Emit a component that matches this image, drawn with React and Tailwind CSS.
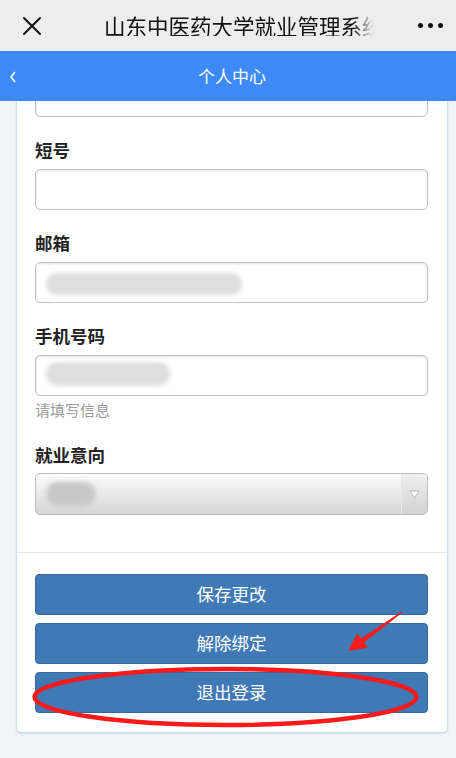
import React from "react";

const font = { fontFamily: '"Noto Sans CJK SC", "Noto Sans", sans-serif' };

const Blur = ({ className }) => (
  <div className={`absolute rounded-full bg-[#dedede] blur-[2px] ${className}`} />
);

const Field = ({ label, children }) => (
  <div>
    <div className="text-[17.5px] font-bold text-[#222] leading-6 mt-[21px] mb-[7px]">{label}</div>
    {children}
  </div>
);

const Input = ({ children }) => (
  <div className="relative h-[41px] rounded-[5px] border border-[#c2c2c2] bg-white shadow-[inset_0_1px_3px_rgba(0,0,0,0.12)] overflow-hidden">
    {children}
  </div>
);

export default function App() {
  return (
    <div className="relative w-[456px] h-[758px] overflow-hidden bg-[#f3f4f8] flex flex-col" style={font}>
      {/* WeChat top bar */}
      <div className="h-[51px] shrink-0 bg-[#ededed] flex items-center">
        <svg width="20" height="20" viewBox="0 0 20 20" className="ml-[22px]">
          <path d="M2 2 L18 18 M18 2 L2 18" stroke="#111" strokeWidth="2" strokeLinecap="round" />
        </svg>
        <div className="ml-[62px] w-[270px] overflow-hidden whitespace-nowrap text-[21.5px] text-[#111] leading-none [mask-image:linear-gradient(to_right,black_92%,transparent_100%)]">
          山东中医药大学就业管理系统
        </div>
        <div className="ml-auto mr-[13px] flex gap-[5px]">
          <span className="w-[5px] h-[5px] rounded-full bg-[#111]" />
          <span className="w-[5px] h-[5px] rounded-full bg-[#111]" />
          <span className="w-[5px] h-[5px] rounded-full bg-[#111]" />
        </div>
      </div>

      {/* Page header */}
      <div className="relative h-[50px] shrink-0 bg-[#3d8af6] flex items-center justify-center">
        <svg width="8" height="12" viewBox="0 0 8 12" className="absolute left-[9px] top-[20px]">
          <path d="M6 1 L2 6 L6 11" stroke="#fff" strokeWidth="1.6" fill="none" />
        </svg>
        <span className="text-[17px] text-white pl-2">个人中心</span>
      </div>

      {/* Scroll content */}
      <div className="flex-1 overflow-hidden">
        <div className="ml-4 mr-2 bg-white border border-t-0 border-[#c9e0ec] rounded-b-[5px] shadow-[0_1px_2px_rgba(150,190,210,0.4)]">
          <div className="pl-[18px] pr-[19px] pb-[37px] border-b border-[#e6e6e6]">
            <div className="-mt-[25px]">
              <Input />
            </div>

            <Field label="短号">
              <Input />
            </Field>

            <Field label="邮箱">
              <Input>
                <Blur className="left-[10px] top-[10px] w-[196px] h-[22px]" />
              </Input>
            </Field>

            <Field label="手机号码">
              <Input>
                <Blur className="left-[10px] top-[6px] w-[124px] h-[24px]" />
              </Input>
            </Field>
            <div className="mt-[4px] text-[15px] leading-5 text-[#9a9a9a]">请填写信息</div>

            <div className="text-[17.5px] font-bold text-[#222] leading-6 mt-[23px] mb-[6px]">就业意向</div>
            <div className="relative h-[42px] rounded-[5px] border border-[#bdbdbd] bg-gradient-to-b from-[#fbfbfb] to-[#d6d6d6] flex overflow-hidden">
              <div className="absolute left-[10px] top-[8px] w-[50px] h-[24px] rounded-full bg-[#c8c8c8] blur-[2px]" />
              <div className="ml-auto w-[26px] border-l border-[#e8e8e8] bg-gradient-to-b from-[#f0f0f0] to-[#d2d2d2] flex items-center justify-center">
                <svg width="11" height="9" viewBox="0 0 11 9">
                  <path d="M1 1 L10 1 L5.5 8 Z" fill="#fff" stroke="#aaa" strokeWidth="0.8" />
                </svg>
              </div>
            </div>
          </div>

          <div className="pl-[18px] pr-[19px] pt-[21px] pb-[19px] flex flex-col gap-[8px]">
            {["保存更改", "解除绑定", "退出登录"].map((t) => (
              <button
                key={t}
                className="h-[41px] w-full rounded-[4px] bg-[#3f79b6] border border-[#35689d] text-white text-[17.5px] flex items-center justify-center"
              >
                {t}
              </button>
            ))}
          </div>
        </div>
      </div>

      {/* Annotation overlay */}
      <svg className="absolute left-0 top-0 pointer-events-none" width="456" height="758" viewBox="0 0 456 758">
        <ellipse cx="225.5" cy="697" rx="191" ry="28" fill="none" stroke="#fa1a1a" strokeWidth="4.5" />
        <polygon
          points="348,651 357.3,633.2 361.1,638.5 401.6,611.4 402.4,612.6 364.1,642.5 367.9,647.8"
          fill="#f51c1c"
        />
      </svg>
    </div>
  );
}
